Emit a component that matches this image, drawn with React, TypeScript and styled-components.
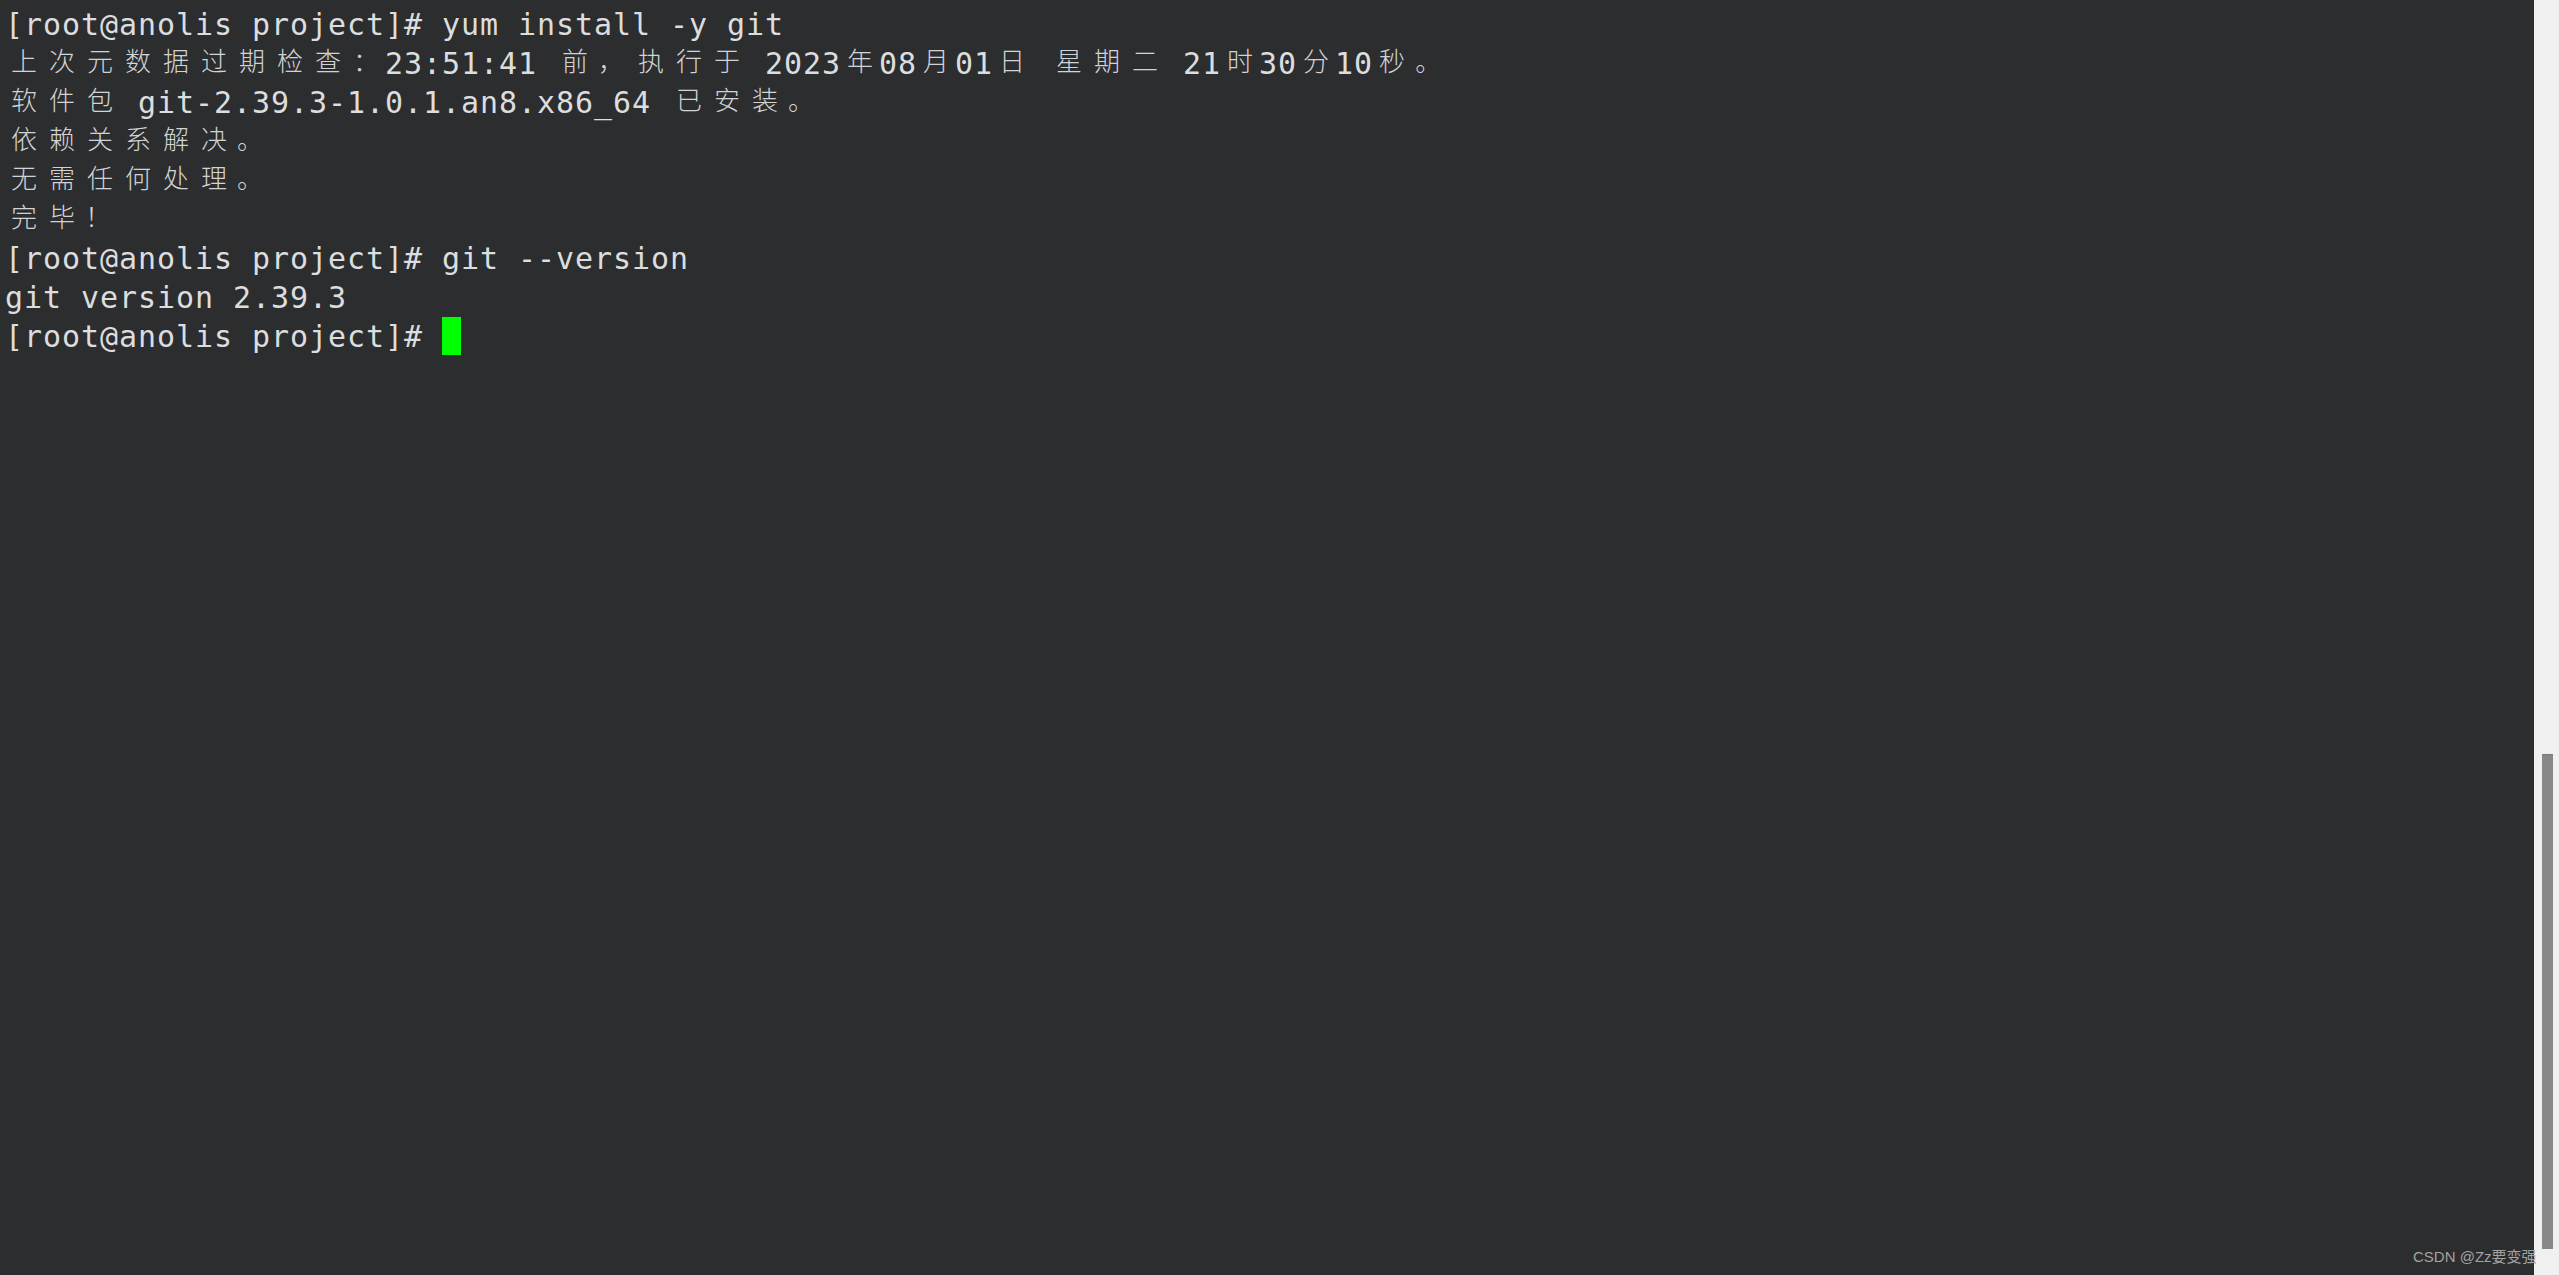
import React from "react";
import styled, { createGlobalStyle } from "styled-components";

const GlobalStyle = createGlobalStyle`
  html, body {
    margin: 0;
    padding: 0;
    background: #2c2d2f;
    overflow: hidden;
  }
`;

const Screen = styled.div`
  position: relative;
  display: flex;
  width: 2559px;
  height: 1275px;
  background: #2c2d2f;
`;

const Terminal = styled.div`
  flex: 1;
  padding: 5px 0 0 5px;
  background: #2c2d2f;
  color: #dcdddf;
  font-family: "DejaVu Sans Mono", "Liberation Mono", monospace;
  font-size: 30px;
  letter-spacing: 0.94px;
`;

const Line = styled.div`
  height: 39px;
  line-height: 39px;
  white-space: pre;
`;

const Ascii = styled.span`
  font-family: "DejaVu Sans Mono", "Liberation Mono", monospace;
`;

const Wide = styled.span<{ $punct?: boolean }>`
  display: inline-block;
  width: 38px;
  box-sizing: border-box;
  text-align: ${(p) => (p.$punct ? "left" : "center")};
  padding-left: ${(p) => (p.$punct ? "4px" : "0")};
  letter-spacing: 0;
  font-family: "Noto Sans CJK SC", "Noto Sans CJK JP", sans-serif;
  font-size: 26px;
  line-height: 28px;
  font-weight: 300;
  color: #d2d3d5;
  vertical-align: 3px;
`;

const Cursor = styled.span`
  display: inline-block;
  width: 19px;
  height: 38px;
  background: #00ff00;
  vertical-align: top;
`;

const Scrollbar = styled.div`
  width: 25px;
  background: #f0f0f0;
  display: flex;
  flex-direction: column;
  padding: 754px 6px 0 8px;
  box-sizing: border-box;
`;

const Thumb = styled.div`
  height: 495px;
  background: #878787;
  border-top: 1px solid #7a7a7a;
  box-sizing: border-box;
`;

const Watermark = styled.div`
  position: absolute;
  left: 2413px;
  bottom: 9px;
  font-family: "Liberation Sans", Arial, "Noto Sans CJK SC", sans-serif;
  font-size: 15px;
  color: #a3a3a3;
  white-space: nowrap;
`;

const wideRe = /[\u3000-\u303f\u4e00-\u9fff\uff00-\uffef]/;
const punctRe = /[。，！]/;

function TermText({ text }: { text: string }) {
  const parts: React.ReactNode[] = [];
  let buf = "";
  let k = 0;
  for (const ch of Array.from(text)) {
    if (wideRe.test(ch)) {
      if (buf) {
        parts.push(<Ascii key={k++}>{buf}</Ascii>);
        buf = "";
      }
      parts.push(
        <Wide key={k++} $punct={punctRe.test(ch)}>
          {ch}
        </Wide>
      );
    } else {
      buf += ch;
    }
  }
  if (buf) parts.push(<Ascii key={k++}>{buf}</Ascii>);
  return <>{parts}</>;
}

const lines = [
  "[root@anolis project]# yum install -y git",
  "上次元数据过期检查：23:51:41 前，执行于 2023年08月01日 星期二 21时30分10秒。",
  "软件包 git-2.39.3-1.0.1.an8.x86_64 已安装。",
  "依赖关系解决。",
  "无需任何处理。",
  "完毕！",
  "[root@anolis project]# git --version",
  "git version 2.39.3",
];

export default function App() {
  return (
    <>
      <GlobalStyle />
      <Screen>
        <Terminal>
          {lines.map((l, i) => (
            <Line key={i}>
              <TermText text={l} />
            </Line>
          ))}
          <Line>
            <TermText text="[root@anolis project]# " />
            <Cursor />
          </Line>
        </Terminal>
        <Scrollbar>
          <Thumb />
        </Scrollbar>
        <Watermark>CSDN @Zz要变强</Watermark>
      </Screen>
    </>
  );
}
